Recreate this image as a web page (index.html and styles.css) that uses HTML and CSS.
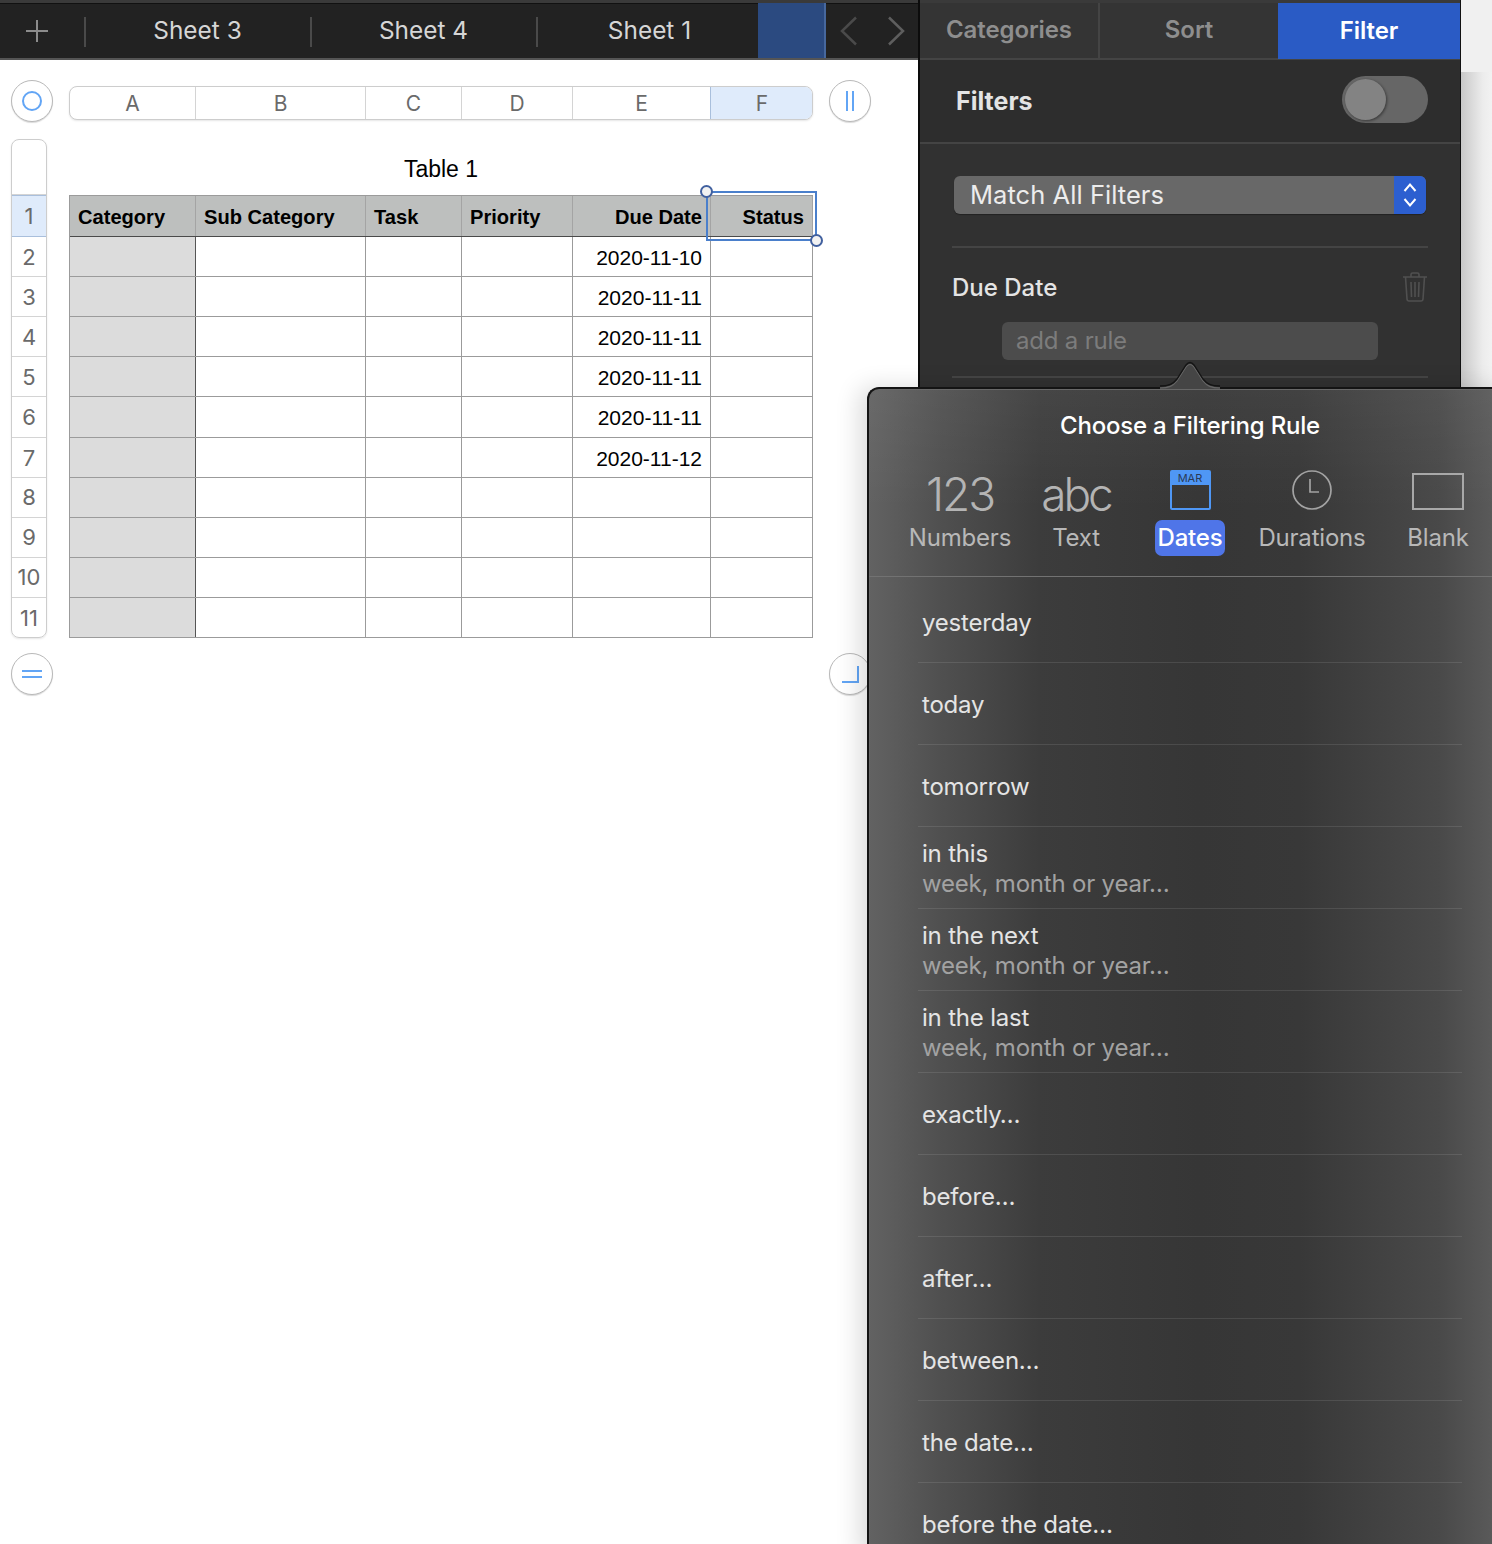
FILE: index.html
```html
<!DOCTYPE html>
<html lang="en">
<head>
<meta charset="utf-8">
<title>Numbers filter</title>
<link rel="stylesheet" href="styles.css">
</head>
<body>
<div class="app">
  <div class="main">
    <div class="tabbar">
      <div class="add-tab"><svg width="24" height="24" viewBox="0 0 24 24"><path d="M12 1v22M1 12h22" stroke="#8c8c8c" stroke-width="2" fill="none"/></svg></div>
      <div class="sheet-tab">Sheet 3</div>
      <div class="sheet-tab">Sheet 4</div>
      <div class="sheet-tab">Sheet 1</div>
      <div class="active-tab"></div>
      <div class="nav">
        <svg width="18" height="30" viewBox="0 0 18 30"><path d="M16 1.500L2 15l14 13.500" stroke="#4a4a4a" stroke-width="2.500" fill="none"/></svg>
        <svg width="18" height="30" viewBox="0 0 18 30"><path d="M2 1.500L16 15 2 28.500" stroke="#5e5e5e" stroke-width="2.500" fill="none"/></svg>
      </div>
    </div>
    <div class="sheet">
      <div class="col-row">
        <div class="round-btn"><svg width="20" height="20" viewBox="0 0 20 20"><circle cx="10" cy="10" r="9" stroke="#62a5f5" stroke-width="2" fill="none"/></svg></div>
        <div class="col-headers">
          <div class="col-h hw-a">A</div><div class="col-h w-b">B</div><div class="col-h w-c">C</div><div class="col-h w-d">D</div><div class="col-h w-e col-before-sel">E</div><div class="col-h w-f col-sel">F</div>
        </div>
        <div class="round-btn"><svg width="10" height="20" viewBox="0 0 10 20"><path d="M2 0v20M8 0v20" stroke="#62a5f5" stroke-width="2" fill="none"/></svg></div>
      </div>
      <div class="grid-row">
        <div class="row-headers">
          <div class="row-h row-blank"></div>
          <div class="row-h row-sel">1</div>
          <div class="row-h">2</div><div class="row-h">3</div><div class="row-h">4</div><div class="row-h">5</div>
          <div class="row-h h41">6</div>
          <div class="row-h">7</div><div class="row-h up">8</div><div class="row-h up">9</div><div class="row-h up">10</div><div class="row-h row-last">11</div>
        </div>
        <div class="table-wrap">
          <div class="table-title">Table 1</div>
          <div class="table">
            <div class="tr head"><div class="td w-a">Category</div><div class="td w-b">Sub Category</div><div class="td w-c">Task</div><div class="td w-d">Priority</div><div class="td w-e right">Due Date</div><div class="td w-f right">Status</div></div>
            <div class="tr"><div class="td w-a cat"></div><div class="td w-b"></div><div class="td w-c"></div><div class="td w-d"></div><div class="td w-e right">2020-11-10</div><div class="td w-f"></div></div>
            <div class="tr"><div class="td w-a cat"></div><div class="td w-b"></div><div class="td w-c"></div><div class="td w-d"></div><div class="td w-e right">2020-11-11</div><div class="td w-f"></div></div>
            <div class="tr"><div class="td w-a cat"></div><div class="td w-b"></div><div class="td w-c"></div><div class="td w-d"></div><div class="td w-e right">2020-11-11</div><div class="td w-f"></div></div>
            <div class="tr"><div class="td w-a cat"></div><div class="td w-b"></div><div class="td w-c"></div><div class="td w-d"></div><div class="td w-e right">2020-11-11</div><div class="td w-f"></div></div>
            <div class="tr h41"><div class="td w-a cat"></div><div class="td w-b"></div><div class="td w-c"></div><div class="td w-d"></div><div class="td w-e right">2020-11-11</div><div class="td w-f"></div></div>
            <div class="tr"><div class="td w-a cat"></div><div class="td w-b"></div><div class="td w-c"></div><div class="td w-d"></div><div class="td w-e right">2020-11-12</div><div class="td w-f"></div></div>
            <div class="tr"><div class="td w-a cat"></div><div class="td w-b"></div><div class="td w-c"></div><div class="td w-d"></div><div class="td w-e"></div><div class="td w-f"></div></div>
            <div class="tr"><div class="td w-a cat"></div><div class="td w-b"></div><div class="td w-c"></div><div class="td w-d"></div><div class="td w-e"></div><div class="td w-f"></div></div>
            <div class="tr"><div class="td w-a cat"></div><div class="td w-b"></div><div class="td w-c"></div><div class="td w-d"></div><div class="td w-e"></div><div class="td w-f"></div></div>
            <div class="tr"><div class="td w-a cat"></div><div class="td w-b"></div><div class="td w-c"></div><div class="td w-d"></div><div class="td w-e"></div><div class="td w-f"></div></div>
          </div>
          <div class="selection"><span class="handle handle-tl"></span><span class="handle handle-br"></span></div>
        </div>
      </div>
      <div class="bottom-row">
        <div class="round-btn"><svg width="20" height="10" viewBox="0 0 20 10"><path d="M0 2h20M0 8h20" stroke="#62a5f5" stroke-width="2" fill="none"/></svg></div>
        <div class="round-btn"><svg width="18" height="18" viewBox="0 0 18 18"><path d="M17 1v16H1" stroke="#62a5f5" stroke-width="2" fill="none"/></svg></div>
      </div>
    </div>
  </div>

  <div class="inspector">
    <div class="insp-tabs">
      <div class="insp-tab tab-sep">Categories</div>
      <div class="insp-tab">Sort</div>
      <div class="insp-tab insp-on">Filter</div>
    </div>
    <div class="filters-row">
      <span class="filters-label">Filters</span>
      <div class="toggle"><span class="knob"></span></div>
    </div>
    <div class="insp-body">
      <div class="select">
        <span class="select-text">Match All Filters</span>
        <span class="select-arrows"><svg width="14" height="28" viewBox="0 0 14 28"><path d="M1.500 10L7 3.500 12.500 10M1.500 18L7 24.500 12.500 18" stroke="#fff" stroke-width="2" fill="none"/></svg></span>
      </div>
      <div class="rule-block">
        <div class="rule-head">
          <span class="rule-name">Due Date</span>
          <svg class="trash" width="24" height="30" viewBox="0 0 24 30"><path d="M0 5h24M8 5V2.500Q8 1 9.500 1h5Q16 1 16 2.500V5M2.500 5l1.500 22q.2 2 2 2h12q1.800 0 2-2l1.500-22M8 10l.5 15M12 10v15M16 10l-.5 15" stroke="#505050" stroke-width="1.600" fill="none"/></svg>
        </div>
        <div class="add-rule">add a rule</div>
      </div>
    </div>
  </div>
  <div class="side"></div>

  <div class="popover">
    <svg class="pop-arrow" width="60" height="29" viewBox="0 0 60 29"><path d="M0 27c9 0 13-2 17-7L26 6q4-5 8 0l9 14c4 5 8 7 17 7v2H0z" fill="#454545"/><path d="M0 28c9 0 13-2 17-7L26 7q4-5 8 0l9 14c4 5 8 7 17 7" fill="none" stroke="#666" stroke-width="1.200"/><path d="M0 26c9 0 13-2 17-7L26 5q4-5 8 0l9 14c4 5 8 7 17 7" fill="none" stroke="#141414" stroke-width="1.300"/></svg>
    <div class="pop-title">Choose a Filtering Rule</div>
    <div class="types">
      <div class="type">
        <div class="type-icon glyph">123</div><div class="type-label">Numbers</div>
      </div>
      <div class="type">
        <div class="type-icon glyph glyph-abc">abc</div><div class="type-label">Text</div>
      </div>
      <div class="type">
        <div class="type-icon"><div class="cal"><div class="cal-top">MAR</div></div></div><div class="type-label type-on">Dates</div>
      </div>
      <div class="type">
        <div class="type-icon"><svg width="42" height="42" viewBox="0 0 42 42"><circle cx="21" cy="21" r="19" stroke="#a3a3a3" stroke-width="1.700" fill="none"/><path d="M19 10v13h9" stroke="#a3a3a3" stroke-width="1.700" fill="none"/></svg></div><div class="type-label">Durations</div>
      </div>
      <div class="type">
        <div class="type-icon"><div class="blank-box"></div></div><div class="type-label">Blank</div>
      </div>
    </div>
    <div class="rules">
      <div class="rule first">yesterday</div>
      <div class="rule">today</div>
      <div class="rule">tomorrow</div>
      <div class="rule two">in this<span class="sub">week, month or year…</span></div>
      <div class="rule two">in the next<span class="sub">week, month or year…</span></div>
      <div class="rule two">in the last<span class="sub">week, month or year…</span></div>
      <div class="rule">exactly…</div>
      <div class="rule">before…</div>
      <div class="rule">after…</div>
      <div class="rule">between…</div>
      <div class="rule">the date…</div>
      <div class="rule">before the date…</div>
    </div>
  </div>
</div>
</body>
</html>
```
FILE: styles.css
```css
* { box-sizing: border-box; }
html, body { margin: 0; padding: 0; }
body { width: 1492px; height: 1544px; overflow: hidden; background: #fff; font-family: "Inter", "Liberation Sans", sans-serif; }
.app { position: relative; display: flex; width: 1492px; height: 1544px; overflow: hidden; }

/* main area */
.main { width: 920px; flex: none; border-right: 2px solid #0c0c0c; background: #fff; }
.tabbar { display: flex; height: 60px; background: #222; border-top: 3px solid #3a3a3a; border-bottom: 2px solid #555; box-shadow: inset 0 1px 0 #111; }
.add-tab { width: 84px; display: flex; align-items: center; justify-content: center; padding-right: 10px; }
.sheet-tab { width: 226px; display: flex; align-items: center; justify-content: center; padding: 0 0 2px 1px; font-size: 24.400px; color: #d6d6d6; position: relative; }
.sheet-tab::before { content: ""; position: absolute; left: 0; top: 14px; height: 30px; width: 2px; background: #4a4a4a; }
.active-tab { width: 68px; margin-left: -4px; background: #2b4a80; border-right: 2px solid #47689e; }
.nav { display: flex; align-items: center; gap: 29px; padding-left: 14px; }

.sheet { display: flex; flex-direction: column; padding-left: 11px; }
.col-row { display: flex; align-items: flex-start; padding-top: 20px; height: 79px; }
.round-btn { width: 42px; height: 42px; flex: none; border-radius: 50%; background: #fff; border: 1px solid #b9b9b9; box-shadow: 0 1px 1px rgba(0,0,0,.15); display: flex; align-items: center; justify-content: center; }
.col-headers { display: flex; margin: 6px 16px 0; width: 744px; height: 34px; border: 1px solid #cdcdcd; border-radius: 8px; box-shadow: 0 1px 2px rgba(0,0,0,.1); overflow: hidden; background: #fff; }
.col-h { flex: none; display: flex; align-items: center; justify-content: center; font-size: 21px; color: #6a6a6a; border-right: 1px solid #d4d4d4; }
.col-h:last-child { border-right: 0; }
.col-before-sel { border-right-color: #a9bfdc; }
.col-sel { background: #dfebfb; }
.hw-a { width: 126px; }
.w-a { width: 126px; }
.w-b { width: 170px; }
.w-c { width: 96px; }
.w-d { width: 111px; }
.w-e { width: 138px; }
.w-f { width: 102px; }

.grid-row { display: flex; }
.row-headers { width: 36px; height: 499px; flex: none; display: flex; flex-direction: column; border: 1px solid #cdcdcd; border-radius: 8px; overflow: hidden; box-shadow: 0 1px 2px rgba(0,0,0,.1); margin-right: 22px; }
.row-h { height: 40px; flex: none; display: flex; align-items: center; justify-content: center; font-size: 22px; color: #6a6a6a; border-bottom: 1px solid #d4d4d4; }
.row-h.h41 { height: 41px; }
.row-h.up { padding-bottom: 2px; }
.row-h.row-blank { height: 55px; }
.row-h.row-sel { height: 42px; background: #dfebfb; border-top: 1px solid #a9bfdc; border-bottom: 1px solid #a9bfdc; }
.row-last { border-bottom: 0; }

.table-wrap { position: relative; width: 744px; font-family: "Liberation Sans", Arial, sans-serif; color: #000; }
.table-title { height: 56px; padding-top: 17px; text-align: center; font-size: 23px; line-height: 26px; }
.table { border-left: 1px solid #9b9b9b; border-bottom: 1px solid #9b9b9b; width: 744px; }
.tr { display: flex; height: 40px; border-bottom: 1px solid #9b9b9b; }
.tr:last-child { border-bottom: 0; height: 39px; }
.tr.h41 { height: 41px; }
.td { flex: none; display: flex; align-items: center; padding: 0 8px; font-size: 21px; border-right: 1px solid #9b9b9b; padding-top: 2px; }
.td.w-a { width: 126px; border-right-color: #555; }
.right { justify-content: flex-end; }
.tr.head { height: 42px; background: #bdbfbe; border-top: 1px solid #9b9b9b; border-bottom-color: #4a4a4a; }
.head .td { font-weight: 700; font-size: 20.100px; border-right-color: #a4a4a4; padding-top: 2px; }
.head .td.w-a { border-right-color: #a4a4a4; }
.cat { background: #dcdcdc; }
.selection { position: absolute; left: 637px; top: 52px; width: 111px; height: 50px; border: 2px solid #4a7fcb; }
.handle { position: absolute; width: 13px; height: 13px; border-radius: 50%; background: #f2f2f2; border: 2px solid #41609f; }
.handle-tl { left: -8px; top: -8px; }
.handle-br { right: -8px; bottom: -8px; }
.bottom-row { display: flex; justify-content: space-between; width: 860px; margin-top: 15px; }

/* inspector */
.inspector { width: 541px; flex: none; background: #313131; border-right: 1px solid #111; height: 400px; }
.insp-tabs { display: flex; height: 60px; border-top: 3px solid #3a3a3a; background: #343434; border-bottom: 2px solid #444; }
.insp-tab { flex: none; width: 178px; display: flex; align-items: center; justify-content: center; padding-bottom: 2px; font-size: 24px; font-weight: 600; color: #8e8e8e; letter-spacing: -.1px; }
.tab-sep { width: 180px; border-right: 2px solid #444; }
.insp-on { width: 182px; background: #2a5bc5; color: #fff; margin-bottom: -1px; }
.filters-row { height: 84px; display: flex; align-items: center; justify-content: space-between; padding: 0 32px 0 36px; background: #2d2d2d; border-bottom: 2px solid #444; }
.filters-label { font-size: 25px; font-weight: 700; color: #e4e4e4; }
.toggle { width: 86px; height: 47px; border-radius: 24px; background: #666; padding: 3px; margin-top: -4px; }
.knob { display: block; width: 41px; height: 41px; border-radius: 50%; background: #838383; box-shadow: 1px 1px 3px rgba(0,0,0,.45); }
.insp-body { padding: 32px 32px 0; }
.select { display: flex; margin: 0 2px; width: 472px; height: 38px; border-radius: 6px; background: #686868; overflow: hidden; box-shadow: 0 1px 1px rgba(0,0,0,.3); }
.select-text { flex: 1; padding-left: 16px; font-size: 25.500px; line-height: 37px; color: #ececec; letter-spacing: .05px; }
.select-arrows { width: 32px; background: #2c5fd0; display: flex; align-items: center; justify-content: center; }
.rule-block { margin-top: 32px; border-top: 2px solid #444; border-bottom: 2px solid #444; height: 132px; padding-top: 21px; }
.rule-head { display: flex; justify-content: space-between; align-items: center; height: 36px; padding-right: 1px; }
.rule-name { font-size: 24px; font-weight: 500; color: #e4e4e4; }
.add-rule { margin: 17px 50px 0; height: 38px; border-radius: 6px; background: #4c4c4c; padding-left: 14px; font-size: 24px; line-height: 38px; color: #7c7c7c; letter-spacing: -.2px; }

.side { flex: 1; height: 100%; background: linear-gradient(90deg, #c8c8c8, #ececec 70%, #f2f2f2); border-top: 72px solid #f0f0f0; }

/* popover */
.popover { position: absolute; left: 867px; top: 387px; width: 640px; height: 1170px; border: 2px solid #141414; border-right: 0; border-radius: 12px 0 0 0; color: #e2e2e2; box-shadow: -8px 0 24px rgba(0,0,0,.14), inset 1px 1px 0 #686868;
  background:
    linear-gradient(180deg, rgba(255,255,255,.05), rgba(255,255,255,0) 120px),
    linear-gradient(90deg, #626262 0, #505050 70px, #3c3c3c 170px, #363636 330px, #383838 430px, #494949 570px, #5a5a5a 625px); }
.pop-arrow { position: absolute; left: 291px; top: -29px; }
.pop-title { height: 80px; padding-top: 20px; text-align: center; font-size: 24px; line-height: 34px; font-weight: 500; color: #fff; width: 642px; letter-spacing: -.2px; }
.types { display: grid; grid-template-columns: 120px 112px 116px 128px 124px; padding-left: 31px; height: 108px; border-bottom: 1px solid #727272; width: 100%; }
.type { display: flex; flex-direction: column; align-items: center; }
.type-icon { height: 50px; display: flex; align-items: flex-start; justify-content: center; }
.glyph { font-size: 46px; font-weight: 300; line-height: 50px; color: #b4b4b4; letter-spacing: -2px; }
.glyph-abc { letter-spacing: -3px; }
.type-label { margin-top: 1px; height: 36px; line-height: 36px; padding: 0 3px; font-size: 24px; color: #b8b8b8; white-space: nowrap; letter-spacing: -.2px; }
.type-on { background: #4f75e8; color: #fff; border-radius: 7px; font-weight: 500; }
.cal { width: 41px; height: 40px; border: 2px solid #4f97f5; border-radius: 2px; margin-top: 1px; }
.cal-top { height: 13px; background: #4f97f5; color: #2a3a55; font-size: 11px; line-height: 13px; text-align: center; }
.blank-box { width: 52px; height: 37px; margin-top: 4px; border: 2px solid #a8a8a8; }
.rules { padding: 0 50px 0 49px; width: 643px; }
.rule { height: 82px; display: flex; flex-direction: column; justify-content: center; font-size: 24px; line-height: 30px; border-bottom: 1px solid rgba(255,255,255,.1); padding: 3px 0 0 4px; letter-spacing: -.2px; color: #e4e4e4; }
.rule.first { height: 86px; padding-top: 7px; }
.sub { color: #a2a2a2; }
```
